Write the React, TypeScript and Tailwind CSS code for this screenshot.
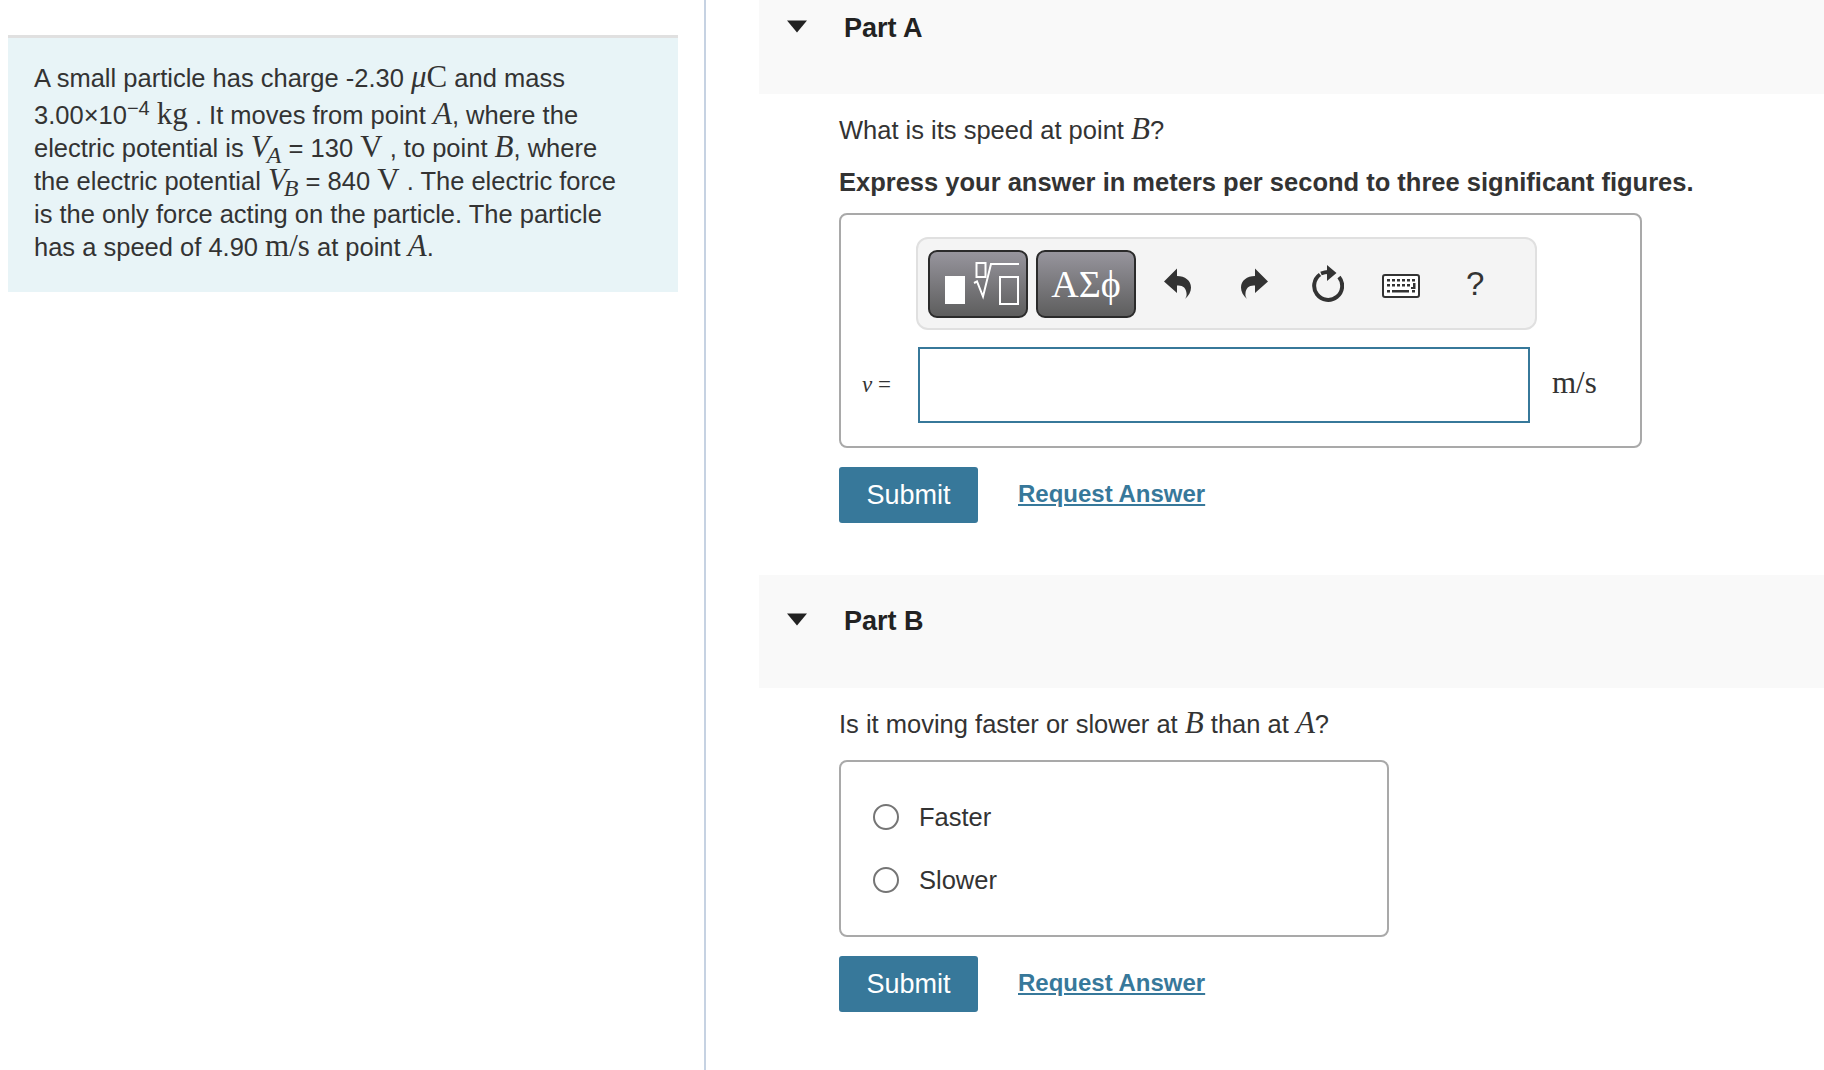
import React from "react";

const sans = "font-['Liberation_Sans',Arial,sans-serif]";

function M({ children, i = false, className = "" }: { children: React.ReactNode; i?: boolean; className?: string }) {
  return (
    <span className={`font-['Liberation_Serif',serif] text-[31px] leading-[20px] ${i ? "italic" : ""} ${className}`}>{children}</span>
  );
}

function Triangle() {
  return (
    <svg width="22" height="13" viewBox="0 0 22 13" className="shrink-0">
      <path d="M1 0.5H21L11 12.5Z" fill="#222" />
    </svg>
  );
}

function PartHeader({ title, className }: { title: string; className: string }) {
  return (
    <div className={`ml-[53px] bg-[#f9f9f9] flex items-start pl-[28px] ${className}`}>
      <div className="mt-[20px] -ml-[1px]">
        <Triangle />
      </div>
      <div className="ml-[36px] mt-[12px] text-[27px] leading-[32px] font-bold text-[#222]">{title}</div>
    </div>
  );
}

function SubmitRow({ className }: { className: string }) {
  return (
    <div className={`flex items-center ${className}`}>
      <button className="w-[139px] h-[56px] rounded-[3px] bg-[#37789a] text-white text-[27px]">Submit</button>
      <a className="ml-[40px] -mt-[2px] text-[#37789a] text-[24px] font-bold underline decoration-2 underline-offset-2">
        Request Answer
      </a>
    </div>
  );
}

function TemplatesIcon() {
  return (
    <svg width="96" height="64" viewBox="0 0 96 64" fill="none">
      <rect x="15" y="24" width="20" height="28" fill="#fff" />
      <rect x="46.5" y="11" width="9" height="14" stroke="#fff" strokeWidth="2" />
      <path d="M44 31l3-1.5 6 15L61 12h28" stroke="#fff" strokeWidth="2" />
      <rect x="70" y="25" width="18" height="27" stroke="#fff" strokeWidth="2" />
    </svg>
  );
}

function UndoIcon({ flip = false }: { flip?: boolean }) {
  return (
    <svg width="27" height="31" viewBox="0 0 27 31" className={flip ? "-scale-x-100" : ""}>
      <path d="M13 0.5L0 13.5 13 25V17.5C19 17 22 20 22.5 25 23 28 22 29.5 21 31 25 27.5 27 23.5 27 19.5 27 12.5 21 8 13 8Z" fill="#333" />
    </svg>
  );
}

function ReloadIcon() {
  return (
    <svg width="32" height="37" viewBox="0 0 32 37" fill="none">
      <path d="M8 9.5A14 14 0 1 0 27 12" stroke="#333" strokeWidth="4" />
      <path d="M15 0L24.5 8 15 16Z" fill="#333" />
      <path d="M9 8.5Q13 7 16 7" stroke="#333" strokeWidth="4" />
    </svg>
  );
}

function KeyboardIcon() {
  const top = [5, 10, 15, 20, 25, 30];
  const mid = [5, 10, 15, 20, 25];
  return (
    <svg width="38" height="24" viewBox="0 0 38 24">
      <rect x="1" y="1" width="36" height="22" rx="2" fill="#fff" stroke="#333" strokeWidth="2" />
      {top.map((x) => <rect key={x} x={x} y="5" width="3" height="2.5" fill="#333" />)}
      {mid.map((x) => <rect key={x} x={x} y="10" width="3" height="2.5" fill="#333" />)}
      <path d="M31 9h2.5v6H29v-2h2z" fill="#333" />
      <rect x="5" y="16" width="3" height="2.5" fill="#333" />
      <rect x="10" y="16" width="17" height="2.5" fill="#333" />
      <rect x="30" y="16" width="3" height="2.5" fill="#333" />
    </svg>
  );
}

function ToolButton({ children, className = "" }: { children?: React.ReactNode; className?: string }) {
  return (
    <div className={`w-[100px] h-[68px] rounded-[9px] border-2 border-[#2b2b2b] bg-gradient-to-b from-[#97959d] to-[#5e5e5e] flex items-center justify-center ${className}`}>
      {children}
    </div>
  );
}

function Radio({ label, className = "" }: { label: string; className?: string }) {
  return (
    <div className={`flex items-center ${className}`}>
      <span className="w-[26px] h-[26px] rounded-full border-2 border-[#757575] bg-white shrink-0" />
      <span className="ml-[20px] text-[25.5px] leading-[30px]">{label}</span>
    </div>
  );
}

function Problem() {
  return (
    <div className="w-[670px] h-[257px] bg-[#e8f4f7] border-t-[3px] border-[#e0e0e0] pl-[26px] pt-[24px] leading-[33px] whitespace-nowrap">
      <div className="h-[33px]">
        A small particle has charge -2.30 <M i>μ</M><M>C</M> and mass
      </div>
      <div className="h-[33px] mt-[4px]">
        3.00×10<sup className="text-[20px] leading-none -top-[9px] relative align-baseline">−4</sup> <M>kg</M> . It moves from point <M i>A</M>, where the
      </div>
      <div className="h-[33px]">
        electric potential is <M i>V</M><sub className="font-['Liberation_Serif',serif] italic text-[24px] leading-none -ml-[3px] top-[6px] relative align-baseline">A</sub> = 130 <M>V</M> , to point <M i>B</M>, where
      </div>
      <div className="h-[33px]">
        the electric potential <M i>V</M><sub className="font-['Liberation_Serif',serif] italic text-[24px] leading-none -ml-[3px] top-[6px] relative align-baseline">B</sub> = 840 <M>V</M> . The electric force
      </div>
      <div className="h-[33px]">is the only force acting on the particle. The particle</div>
      <div className="h-[33px]">
        has a speed of 4.90 <M>m/s</M> at point <M i>A</M>.
      </div>
    </div>
  );
}

function PartA() {
  return (
    <div className="pl-[133px]">
      <div className="mt-[20px] h-[33px] leading-[33px]">
        What is its speed at point <M i>B</M>?
      </div>
      <div className="mt-[19px] h-[33px] leading-[33px] font-bold">
        Express your answer in meters per second to three significant figures.
      </div>
      <div className="mt-[14px] w-[803px] h-[235px] rounded-[8px] border-2 border-[#a9a9a9] pl-[75px] pt-[22px]">
        <div className="w-[621px] h-[93px] rounded-[12px] border-2 border-[#e0e0e0] bg-[#f4f4f4] flex items-center pl-[10px]">
          <ToolButton><TemplatesIcon /></ToolButton>
          <ToolButton className="ml-[8px]">
            <span className="font-['Liberation_Serif',serif] text-[38px] leading-none text-white">ΑΣϕ</span>
          </ToolButton>
          <div className="ml-[28px]"><UndoIcon /></div>
          <div className="ml-[50px]"><UndoIcon flip /></div>
          <div className="ml-[44px]"><ReloadIcon /></div>
          <div className="ml-[38px] mt-[5px]"><KeyboardIcon /></div>
          <div className="ml-[46px] text-[33px] leading-none">?</div>
        </div>
        <div className="flex items-center mt-[17px] -ml-[75px]">
          <span className="ml-[21px] w-[56px] text-[23px] font-['Liberation_Serif',serif]"><i>v</i> =</span>
          <div className="w-[612px] h-[76px] border-2 border-[#37789a] bg-white" />
          <span className="ml-[22px] -mt-[4px] font-['Liberation_Serif',serif] text-[31px]">m/s</span>
        </div>
      </div>
      <SubmitRow className="mt-[19px]" />
    </div>
  );
}

function PartB() {
  return (
    <div className="pl-[133px]">
      <div className="mt-[20px] h-[33px] leading-[33px]">
        Is it moving faster or slower at <M i>B</M> than at <M i>A</M>?
      </div>
      <div className="mt-[19px] w-[550px] h-[177px] rounded-[8px] border-2 border-[#a9a9a9] pl-[32px] pt-[40px]">
        <Radio label="Faster" />
        <Radio label="Slower" className="mt-[33px]" />
      </div>
      <SubmitRow className="mt-[19px]" />
    </div>
  );
}

export default function App() {
  return (
    <div className={`${sans} w-[1824px] h-[1070px] overflow-hidden bg-white text-[#333] flex text-[25.5px]`}>
      <div className="w-[706px] h-full shrink-0 border-r-2 border-[#c6d2e2] pl-[8px] pt-[35px]">
        <Problem />
      </div>
      <div className="flex-1 min-w-0">
        <PartHeader title="Part A" className="h-[94px]" />
        <PartA />
        <PartHeader title="Part B" className="h-[113px] mt-[52px] pt-[18px]" />
        <PartB />
      </div>
    </div>
  );
}
